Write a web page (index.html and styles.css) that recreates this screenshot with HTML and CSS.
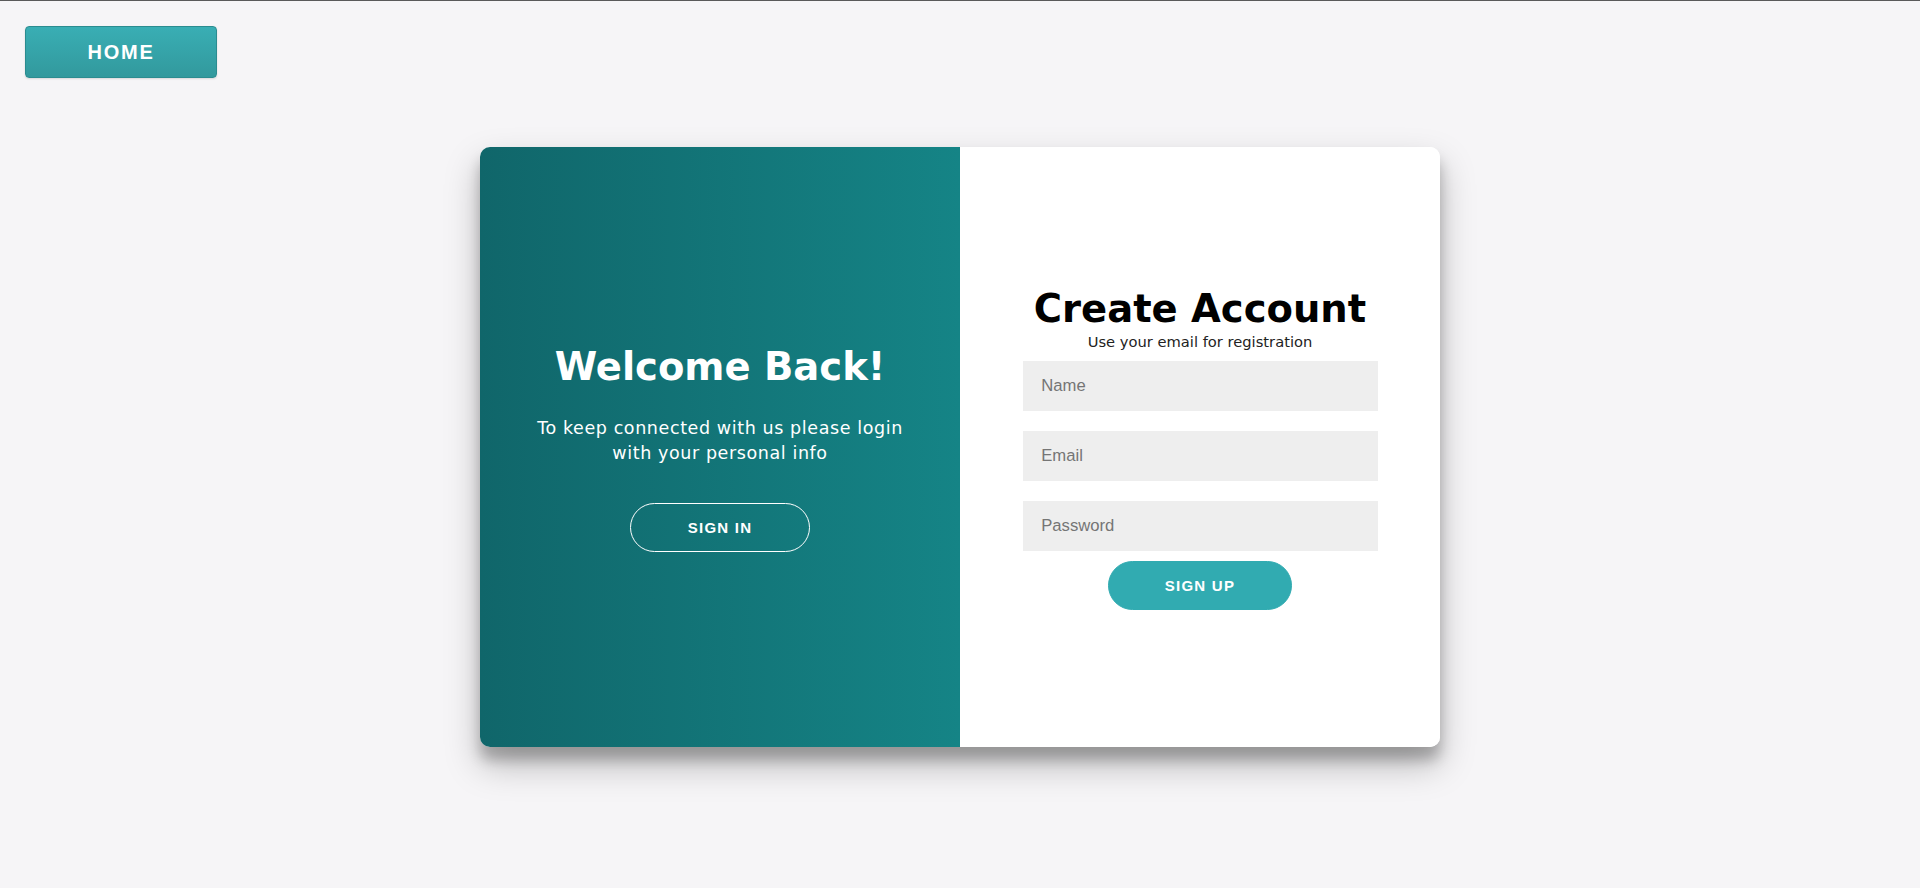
FILE: index.html
```html
<!DOCTYPE html>
<html lang="en">
<head>
<meta charset="utf-8">
<title>Create Account</title>
<link rel="stylesheet" href="styles.css">
</head>
<body>
  <header class="topbar">
    <button class="home-btn" type="button">HOME</button>
  </header>
  <main class="card">
    <section class="panel welcome">
      <h1 class="title">Welcome Back!</h1>
      <p class="lead">To keep connected with us please login with your personal info</p>
      <button class="pill ghost" type="button">Sign In</button>
    </section>
    <form class="panel signup">
      <h1 class="title dark">Create Account</h1>
      <span class="hint">Use your email for registration</span>
      <input class="field" type="text" placeholder="Name">
      <input class="field" type="email" placeholder="Email">
      <input class="field" type="password" placeholder="Password">
      <button class="pill solid" type="button">Sign Up</button>
    </form>
  </main>
</body>
</html>
```

FILE: styles.css
```css
html {
  border-top: 1px solid #5a5a5a;
}

body {
  margin: 0;
  background: #f6f5f7;
  font-family: "DejaVu Sans", "Noto Sans", sans-serif;
  min-height: 887px;
}

.topbar {
  display: flex;
  padding: 25px 0 0 25px;
}

.home-btn {
  width: 192px;
  height: 52px;
  border: 1px solid #2b8c90;
  border-radius: 4px;
  background: linear-gradient(to bottom, #39aeb4, #32999d);
  box-shadow: 0 1px 2px rgba(0, 0, 0, 0.12);
  color: #ffffff;
  font-family: "Liberation Sans", Arial, sans-serif;
  font-size: 20px;
  font-weight: bold;
  letter-spacing: 1.8px;
  padding: 0;
}

.card {
  width: 960px;
  height: 600px;
  margin: 69px auto 0;
  display: grid;
  grid-template-columns: 1fr 1fr;
  border-radius: 10px;
  overflow: hidden;
  background: #ffffff;
  box-shadow: 0 17.5px 35px rgba(0, 0, 0, 0.25), 0 12.5px 12.5px rgba(0, 0, 0, 0.22);
}

.panel {
  display: flex;
  flex-direction: column;
  align-items: center;
  justify-content: center;
  text-align: center;
}

.welcome {
  padding: 0 50px;
  background: linear-gradient(to right, #10666a, #158486);
  color: #ffffff;
}

.signup {
  padding: 0 62.5px;
  margin: 0;
  background: #ffffff;
}

.title {
  margin: 0;
  font-size: 38.5px;
  line-height: 49px;
  font-weight: bold;
}

.title.dark {
  color: #000000;
}

.lead {
  margin: 25px 0 37.5px;
  font-size: 17.5px;
  line-height: 25px;
  letter-spacing: 0.6px;
  font-weight: normal;
}

.hint {
  font-size: 14.7px;
  line-height: 18px;
  color: #222222;
}

.field {
  box-sizing: border-box;
  width: 100%;
  margin: 10px 0;
  padding: 15px 18.75px;
  border: none;
  background: #eeeeee;
  font-family: "Liberation Sans", Arial, sans-serif;
  font-size: 16.67px;
  color: #222222;
  outline: none;
}

.field::placeholder {
  color: #757575;
}

.pill {
  border-radius: 25px;
  border: 1px solid #31abb1;
  padding: 15px 56.25px;
  font-family: "Liberation Sans", Arial, sans-serif;
  font-size: 15px;
  font-weight: bold;
  letter-spacing: 1.25px;
  text-transform: uppercase;
  color: #ffffff;
}

.pill.solid {
  background: #31abb1;
}

.pill.ghost {
  background: transparent;
  border-color: #ffffff;
}
```
